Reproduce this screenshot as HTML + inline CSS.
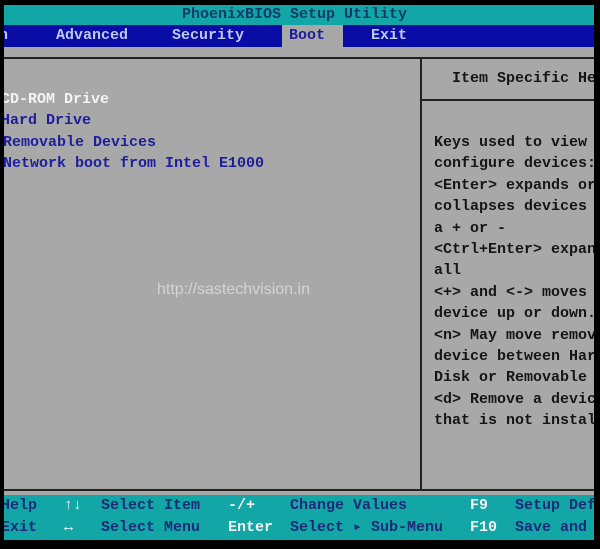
<!DOCTYPE html>
<html><head><style>
body{margin:0;width:600px;height:549px;background:#000;overflow:hidden;position:relative;font-family:"Liberation Mono",monospace;font-weight:bold;font-size:15px;}
.a{position:absolute;white-space:pre;line-height:18px;}
#gray{position:absolute;left:4px;top:47px;width:590px;height:450px;background:#a8a8a8;}
#title{position:absolute;left:4px;top:5px;width:590px;height:20px;background:#12a6a6;}
#menu{position:absolute;left:4px;top:25px;width:590px;height:22px;background:#0a0ca6;}
#foot{position:absolute;left:4px;top:495px;width:590px;height:45px;background:#12a6a6;}
.hl{position:absolute;background:#222;}
.b{color:#1e1e9c}.w{color:#f4f4f4}.k{color:#151515}.d{color:#1c2a78}.m{color:#c0c8ee}
</style></head><body>
<div id="title"></div><div id="menu"></div><div id="gray"></div><div id="foot"></div>
<div style="position:absolute;left:282px;top:25px;width:61px;height:22px;background:#a8a8a8"></div>
<div class="hl" style="left:4px;top:57px;width:590px;height:2px"></div>
<div class="hl" style="left:420px;top:57px;width:2px;height:433px"></div>
<div class="hl" style="left:421px;top:99px;width:173px;height:2px"></div>
<div class="hl" style="left:4px;top:489px;width:590px;height:2px"></div>
<div class="a" style="left:182px;top:6px;color:#123a6a">PhoenixBIOS Setup Utility</div>
<div class="a m" style="left:-1px;top:27px">n</div>
<div class="a m" style="left:56px;top:27px">Advanced</div>
<div class="a m" style="left:172px;top:27px">Security</div>
<div class="a b" style="left:289px;top:27px">Boot</div>
<div class="a m" style="left:371px;top:27px">Exit</div>
<div class="a w" style="left:1px;top:91px">CD-ROM Drive</div>
<div class="a b" style="left:1px;top:112px">Hard Drive</div>
<div class="a b" style="left:3px;top:134px">Removable Devices</div>
<div class="a b" style="left:3px;top:155px">Network boot from Intel E1000</div>
<div class="a k" style="left:452px;top:70px">Item Specific He</div>
<div class="a k" style="left:434px;top:132px;line-height:21.4px">Keys used to view
configure devices:
&lt;Enter&gt; expands or
collapses devices
a + or -
&lt;Ctrl+Enter&gt; expan
all
&lt;+&gt; and &lt;-&gt; moves
device up or down.
&lt;n&gt; May move remov
device between Har
Disk or Removable
&lt;d&gt; Remove a devic
that is not instal</div>
<div class="a" style="left:157px;top:281px;color:#d4d4d4;font-family:'Liberation Sans',sans-serif;font-weight:normal;font-size:16px">http://sastechvision.in</div>
<div class="a d" style="left:1px;top:497px">Help</div>
<div class="a d" style="left:1px;top:519px">Exit</div>
<div class="a w" style="left:64px;top:497px">↑↓</div>
<div class="a w" style="left:64px;top:519px">↔</div>
<div class="a d" style="left:101px;top:497px">Select Item</div>
<div class="a d" style="left:101px;top:519px">Select Menu</div>
<div class="a w" style="left:228px;top:497px">-/+</div>
<div class="a w" style="left:228px;top:519px">Enter</div>
<div class="a d" style="left:290px;top:497px">Change Values</div>
<div class="a d" style="left:290px;top:519px">Select ▸ Sub-Menu</div>
<div class="a w" style="left:470px;top:497px">F9</div>
<div class="a w" style="left:470px;top:519px">F10</div>
<div class="a d" style="left:515px;top:497px">Setup Def</div>
<div class="a d" style="left:515px;top:519px">Save and</div>
<div style="position:absolute;left:0;top:0;width:4px;height:549px;background:#000"></div>
<div style="position:absolute;left:594px;top:0;width:6px;height:549px;background:#000"></div>
</body></html>
